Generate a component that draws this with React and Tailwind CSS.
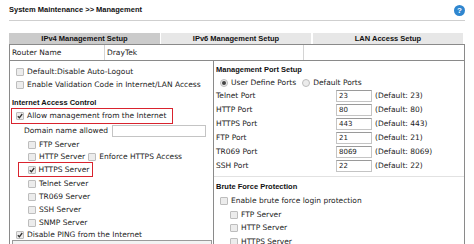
import React from "react";

const txt = "font-['DejaVu_Sans',Verdana,sans-serif] text-[7.5px] text-[#222]";
const bold = "font-['Liberation_Sans',Arial,sans-serif] font-bold text-[7.5px] text-[#111]";

function Check({ checked }) {
  return (
    <span className="inline-flex items-center justify-center w-[8px] h-[8px] border border-[#bdbdbd] bg-[#ececec] rounded-[1px] shrink-0">
      {checked && (
        <svg width="6" height="6" viewBox="0 0 6 6">
          <path d="M0.8 3.2 L2.4 4.8 L5.2 1" stroke="#333" strokeWidth="1.3" fill="none" />
        </svg>
      )}
    </span>
  );
}

function Radio({ checked }) {
  return (
    <span className="inline-flex items-center justify-center w-[8px] h-[8px] rounded-full border border-[#bdbdbd] bg-[#ececec] shrink-0">
      {checked && <span className="w-[4px] h-[4px] rounded-full bg-[#444]" />}
    </span>
  );
}

function Row({ h, pl, checked, children }) {
  return (
    <div className={`flex items-center ${txt}`} style={{ height: h, paddingLeft: pl }}>
      <Check checked={checked} />
      <span className="ml-[3px] whitespace-nowrap">{children}</span>
    </div>
  );
}

const ports = [
  ["Telnet Port", "23"],
  ["HTTP Port", "80"],
  ["HTTPS Port", "443"],
  ["FTP Port", "21"],
  ["TR069 Port", "8069"],
  ["SSH Port", "22"],
];

export default function App() {
  return (
    <div className="w-[474px] h-[244px] bg-white overflow-hidden">
      {/* title */}
      <div className="flex justify-between ml-[9px] mr-[9px] h-[21px] border-b border-[#cfcfcf]">
        <span className={`${bold} mt-[4px]`}>System Maintenance &gt;&gt; Management</span>
        <span className="w-[11px] h-[11px] mt-[5px] rounded-full bg-[#2f86cf] text-white text-[8px] font-bold font-['Liberation_Sans',Arial,sans-serif] flex items-center justify-center">?</span>
      </div>

      {/* tabs */}
      <div className="flex ml-[9px] mt-[12px] h-[11px] w-[454px] gap-[1px]">
        <div className={`w-[151px] bg-[#cbcbcb] flex items-center justify-center ${bold}`}>IPv4 Management Setup</div>
        <div className={`w-[150px] bg-[#e7e7e7] flex items-center justify-center ${bold}`}>IPv6 Management Setup</div>
        <div className={`flex-1 ml-[1px] bg-[#e7e7e7] flex items-center justify-center ${bold}`}>LAN Access Setup</div>
      </div>

      {/* table */}
      <div className="ml-[9px] w-[456px] h-[220px] border border-[#8a8a8a] border-b-0">
        <div className={`flex h-[16px] border-b border-[#8a8a8a] ${txt}`}>
          <div className="w-[95px] border-r border-[#d4d4d4] flex items-center pl-[2px]">Router Name</div>
          <div className="w-[199px] border-r border-[#d4d4d4] flex items-center pl-[2px]">DrayTek</div>
          <div className="flex-1" />
        </div>

        <div className="flex h-[200px]">
          {/* left panel */}
          <div className="w-[204px] border-r border-[#8a8a8a] pt-[4px]">
            <Row h={13} pl={6}>Default:Disable Auto-Logout</Row>
            <Row h={13} pl={6}>Enable Validation Code in Internet/LAN Access</Row>
            <div className="h-[6px]" />
            <div className={`${bold} h-[11px] flex items-center pl-[2px]`}>Internet Access Control</div>
            <div className="h-[16px] flex items-center ml-[1px] w-[162px] border-[1.5px] border-[#d9232e] pl-[4px]">
              <Check checked />
              <span className={`${txt} ml-[3px] whitespace-nowrap`}>Allow management from the Internet</span>
            </div>
            <div className={`h-[14px] flex items-center pl-[14px] ${txt}`}>
              <span className="whitespace-nowrap">Domain name allowed</span>
              <span className="ml-[4px] w-[94px] h-[12px] border border-[#c4c4c4] bg-white" />
            </div>
            <Row h={13} pl={18}>FTP Server</Row>
            <div className={`h-[11px] flex items-center pl-[18px] ${txt}`}>
              <Check />
              <span className="ml-[3px] whitespace-nowrap">HTTP Server</span>
              <span className="ml-[3px] flex"><Check /></span>
              <span className="ml-[3px] whitespace-nowrap">Enforce HTTPS Access</span>
            </div>
            <div className="h-[15px] flex items-center ml-[8px] w-[75px] border-[1.5px] border-[#d9232e] pl-[8.5px]">
              <Check checked />
              <span className={`${txt} ml-[3px] whitespace-nowrap`}>HTTPS Server</span>
            </div>
            <Row h={13} pl={18}>Telnet Server</Row>
            <Row h={13} pl={18}>TR069 Server</Row>
            <Row h={13} pl={18}>SSH Server</Row>
            <Row h={13} pl={18}>SNMP Server</Row>
            <Row h={11} pl={6} checked>Disable PING from the Internet</Row>
            <div className="ml-[2px] mr-[1px] h-[10px] border border-[#9a9a9a] bg-[#f2f2f2]" />
          </div>

          {/* right panel */}
          <div className="flex-1 pt-[3px]">
            <div className={`${bold} h-[12px] flex items-center pl-[2px]`}>Management Port Setup</div>
            <div className={`h-[13px] flex items-center pl-[6px] ${txt}`}>
              <Radio checked />
              <span className="ml-[3px]">User Define Ports</span>
              <span className="ml-[6px] flex"><Radio /></span>
              <span className="ml-[3px]">Default Ports</span>
            </div>
            {ports.map(([label, v]) => (
              <div key={label} className={`h-[14px] flex items-center pl-[2px] ${txt}`}>
                <span className="w-[120px]">{label}</span>
                <span className="w-[36px] h-[12px] border border-[#c4c4c4] border-t-[#9a9a9a] flex items-center pl-[2px] text-[7px]">{v}</span>
                <span className="ml-[3px]">(Default: {v})</span>
              </div>
            ))}
            <div className="mt-[3px] border-t border-[#e2e2e2] pt-[3px]">
              <div className={`${bold} h-[14px] flex items-center pl-[2px]`}>Brute Force Protection</div>
              <Row h={14} pl={6}>Enable brute force login protection</Row>
              <Row h={13} pl={16}>FTP Server</Row>
              <Row h={14} pl={16}>HTTP Server</Row>
              <Row h={13} pl={16}>HTTPS Server</Row>
            </div>
          </div>
        </div>
      </div>
    </div>
  );
}
